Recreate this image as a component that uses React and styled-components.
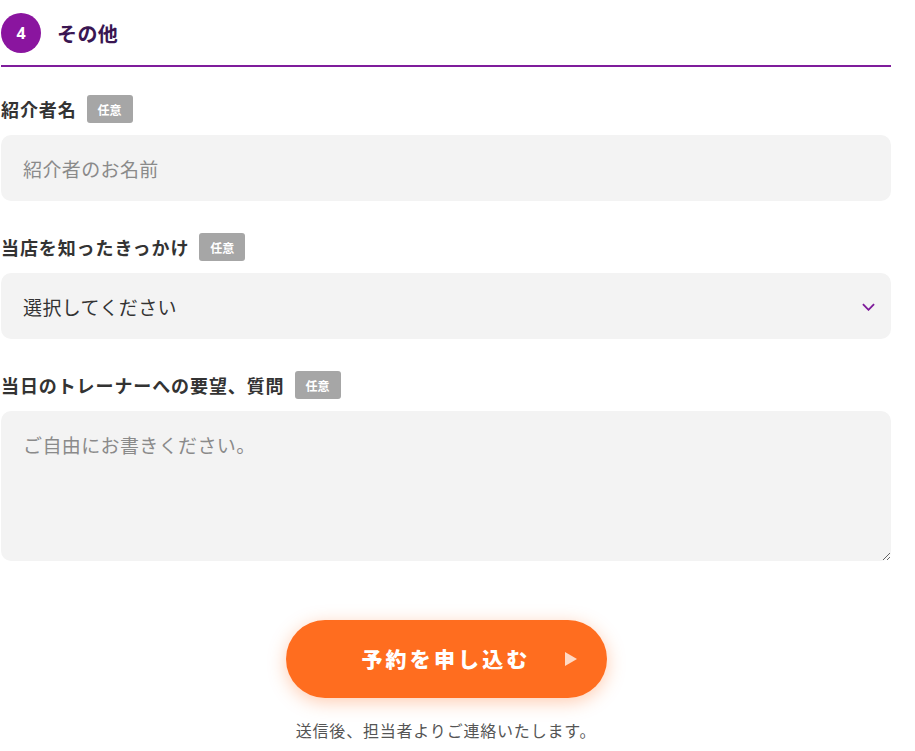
import React from "react";
import styled, { createGlobalStyle } from "styled-components";

const GlobalStyle = createGlobalStyle`
  * { box-sizing: border-box; }
  body {
    margin: 0;
    background: #ffffff;
    font-family: "Noto Sans CJK JP", "Noto Sans", sans-serif;
    color: #333333;
  }
`;

const Badge = () => <Optional>任意</Optional>;

const Field = ({ label, children }) => (
  <FieldBlock>
    <LabelRow>
      <Label>{label}</Label>
      <Badge />
    </LabelRow>
    {children}
  </FieldBlock>
);

export default function App() {
  return (
    <>
      <GlobalStyle />
      <Section>
        <Heading>
          <StepNumber>4</StepNumber>
          <HeadingTitle>その他</HeadingTitle>
        </Heading>

        <Fields>
          <Field label="紹介者名">
            <TextInput type="text" placeholder="紹介者のお名前" />
          </Field>

          <Field label="当店を知ったきっかけ">
            <SelectWrap>
              <Select defaultValue="">
                <option value="">選択してください</option>
                <option value="web">ウェブ検索</option>
                <option value="sns">SNS</option>
                <option value="friend">知人の紹介</option>
              </Select>
              <Chevron viewBox="0 0 14 8" aria-hidden="true">
                <path d="M1 1l6 6 6-6" fill="none" stroke="#7d1a9a" strokeWidth="2" />
              </Chevron>
            </SelectWrap>
          </Field>

          <Field label="当日のトレーナーへの要望、質問">
            <TextArea placeholder="ご自由にお書きください。" />
          </Field>
        </Fields>

        <Submit>
          <SubmitButton type="button">
            予約を申し込む
            <Arrow />
          </SubmitButton>
          <Note>送信後、担当者よりご連絡いたします。</Note>
        </Submit>
      </Section>
    </>
  );
}

const Section = styled.section`
  width: 891px;
  padding: 13px 0 20px 1px;
`;

const Heading = styled.div`
  display: flex;
  align-items: center;
  gap: 16px;
  padding-bottom: 12px;
  border-bottom: 2px solid #7f1d9c;
`;

const StepNumber = styled.span`
  width: 40px;
  height: 40px;
  border-radius: 50%;
  background: #8a159f;
  color: #ffffff;
  display: flex;
  align-items: center;
  justify-content: center;
  font-family: "Noto Sans", sans-serif;
  font-weight: 700;
  font-size: 16px;
`;

const HeadingTitle = styled.h2`
  margin: 0;
  font-size: 20px;
  font-weight: 700;
  color: #3a1652;
  letter-spacing: 0.02em;
`;

const Fields = styled.div`
  display: flex;
  flex-direction: column;
  gap: 32px;
  padding-top: 28px;
`;

const FieldBlock = styled.div`
  display: flex;
  flex-direction: column;
  gap: 12px;
`;

const LabelRow = styled.div`
  display: flex;
  align-items: center;
  gap: 10px;
  height: 28px;
`;

const Label = styled.label`
  font-size: 18px;
  font-weight: 700;
  color: #333333;
  letter-spacing: 0.05em;
`;

const Optional = styled.span`
  display: inline-flex;
  align-items: center;
  justify-content: center;
  width: 46px;
  height: 28px;
  border-radius: 3px;
  background: #a6a6a6;
  color: #ffffff;
  font-size: 12px;
  font-weight: 700;
`;

const fieldBase = `
  width: 100%;
  border: none;
  outline: none;
  border-radius: 10px;
  background: #f3f3f3;
  font-family: "Noto Sans CJK JP", "Noto Sans", sans-serif;
  font-size: 19px;
  letter-spacing: 0.02em;
  color: #333333;
  padding: 0 22px;
  &::placeholder { color: #8a8a8a; }
`;

const TextInput = styled.input`
  ${fieldBase}
  height: 66px;
`;

const SelectWrap = styled.div`
  position: relative;
`;

const Select = styled.select`
  ${fieldBase}
  height: 66px;
  appearance: none;
`;

const Chevron = styled.svg`
  position: absolute;
  right: 16px;
  top: 30px;
  width: 13px;
  height: 8px;
  pointer-events: none;
`;

const TextArea = styled.textarea`
  ${fieldBase}
  height: 150px;
  padding: 20px 22px;
  line-height: 1.5;
  resize: vertical;
  display: block;
`;

const Submit = styled.div`
  display: flex;
  flex-direction: column;
  align-items: center;
  gap: 20px;
  padding-top: 59px;
`;

const SubmitButton = styled.button`
  position: relative;
  width: 321px;
  height: 78px;
  border: none;
  border-radius: 39px;
  background: #ff6d1f;
  color: #ffffff;
  font-family: "Noto Sans CJK JP", "Noto Sans", sans-serif;
  font-size: 21px;
  font-weight: 900;
  letter-spacing: 0.15em;
  box-shadow: 0 4px 18px rgba(255, 109, 31, 0.35);
  cursor: pointer;
  display: flex;
  align-items: center;
  justify-content: center;
  padding: 0 0 2px 0;
`;

const Arrow = styled.span`
  position: absolute;
  right: 30px;
  top: 50%;
  transform: translateY(-50%);
  width: 0;
  height: 0;
  border-top: 7px solid transparent;
  border-bottom: 7px solid transparent;
  border-left: 12px solid #ffd9c4;
`;

const Note = styled.p`
  margin: 0;
  font-size: 16px;
  color: #555555;
  letter-spacing: 0.05em;
`;
